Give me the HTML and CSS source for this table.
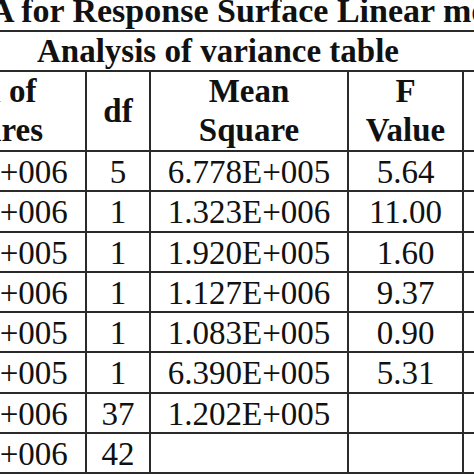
FILE: index.html
```html
<!DOCTYPE html>
<html lang="en">
<head>
  <meta charset="UTF-8">
  <meta name="viewport" content="width=device-width, initial-scale=1.0">
  <title>ANOVA table</title>
  <link rel="stylesheet" href="styles.css">
</head>
<body>
  <div class="sheet">
    <table class="anova">
      <colgroup>
        <col class="c_source">
        <col class="c_ss">
        <col class="c_df">
        <col class="c_ms">
        <col class="c_f">
        <col class="c_p">
      </colgroup>
      <tr class="nadpis">
        <td colspan="6">ANOVA for Response Surface Linear model</td>
      </tr>
      <tr class="podnadpis">
        <td colspan="6">Analysis of variance table</td>
      </tr>
      <tr class="hlavicka">
        <th>Source</th>
        <th>Sum of<br>Squares</th>
        <th>df</th>
        <th>Mean<br>Square</th>
        <th>F<br>Value</th>
        <th>p-value<br>Prob &gt; F</th>
      </tr>
      <tr><td>Model</td><td>3.389E+006</td><td>5</td><td>6.778E+005</td><td>5.64</td><td>0.0006</td></tr>
      <tr><td>A-Speed</td><td>1.323E+006</td><td>1</td><td>1.323E+006</td><td>11.00</td><td>0.0020</td></tr>
      <tr><td>B-Feed</td><td>1.920E+005</td><td>1</td><td>1.920E+005</td><td>1.60</td><td>0.2142</td></tr>
      <tr><td>C-Depth</td><td>1.127E+006</td><td>1</td><td>1.127E+006</td><td>9.37</td><td>0.0041</td></tr>
      <tr><td>D-Angle</td><td>1.083E+005</td><td>1</td><td>1.083E+005</td><td>0.90</td><td>0.3488</td></tr>
      <tr><td>E-Time</td><td>6.390E+005</td><td>1</td><td>6.390E+005</td><td>5.31</td><td>0.0269</td></tr>
      <tr><td>Residual</td><td>4.447E+006</td><td>37</td><td>1.202E+005</td><td></td><td></td></tr>
      <tr><td>Cor Total</td><td>7.836E+006</td><td>42</td><td></td><td></td><td></td></tr>
    </table>
  </div>
</body>
</html>
```

FILE: styles.css
```css
html, body {
  margin: 0;
  padding: 0;
  height: 100%;
}
body {
  background-color: white;
  overflow: hidden;
}
.sheet {
  width: 962px;
  margin-left: -264px;
  margin-top: -8px;
}
.anova {
  width: 962px;
  table-layout: fixed;
  border-collapse: collapse;
  font-family: "Liberation Serif", "Times New Roman", serif;
  font-size: 33px;
  color: #111;
}
.c_source { width: 150px; }
.c_ss { width: 199px; }
.c_df { width: 64px; }
.c_ms { width: 198px; }
.c_f { width: 115px; }
.c_p { width: 236px; }

.anova td, .anova th {
  border: 2px solid #2a2a2a;
  padding: 2px 0 0 0;
  line-height: 36.3px;
  text-align: center;
  white-space: nowrap;
  overflow: hidden;
}
.anova th {
  font-weight: bold;
  line-height: 39px;
  padding: 0;
}
.nadpis td, .podnadpis td {
  font-weight: bold;
  line-height: 38px;
  padding: 0;
}
.nadpis td {
  border-top: none;
  font-size: 34px;
  padding-right: 10px;
}
.podnadpis td {
  padding-top: 1px;
  line-height: 37px;
}
```
